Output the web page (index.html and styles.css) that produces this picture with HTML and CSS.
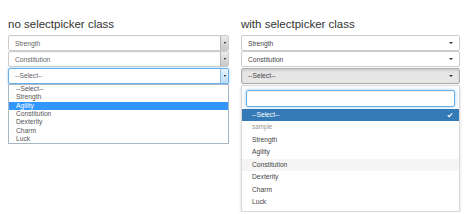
FILE: index.html
```html
<!DOCTYPE html>
<html lang="en">
<head>
  <meta charset="UTF-8">
  <title>Selectpicker demo</title>
  <link rel="stylesheet" href="styles.css">
</head>
<body>

<div class="columns">

  <div class="column left">
    <h3>no selectpicker class</h3>
    <div class="native-select">
      <span class="value">Strength</span>
      <span class="arrow-btn"><span class="arrow"></span></span>
    </div>
    <div class="native-select">
      <span class="value">Constitution</span>
      <span class="arrow-btn"><span class="arrow"></span></span>
    </div>
    <div class="native-select focused">
      <span class="value">--Select--</span>
      <span class="arrow-btn"><span class="arrow"></span></span>
    </div>
    <ul class="native-list">
      <li>--Select--</li>
      <li>Strength</li>
      <li class="highlight">Agility</li>
      <li>Constitution</li>
      <li>Dexterity</li>
      <li>Charm</li>
      <li>Luck</li>
    </ul>
  </div>

  <div class="column right">
    <h3>with selectpicker class</h3>
    <div class="picker-btn">
      <span>Strength</span>
      <span class="caret"></span>
    </div>
    <div class="picker-btn">
      <span>Constitution</span>
      <span class="caret"></span>
    </div>
    <div class="picker-btn open">
      <span>--Select--</span>
      <span class="caret"></span>
    </div>
    <div class="picker-menu">
      <div class="searchbox">
        <input type="text">
      </div>
      <ul>
        <li class="active">--Select--
          <svg class="check" viewBox="0 0 10 8" width="6" height="5">
            <path d="M0.5 4.2 L3.6 7.2 L9.5 1.2 L8.2 0 L3.6 4.6 L1.8 2.9 Z" fill="#fff"/>
          </svg>
        </li>
        <li class="header">sample</li>
        <li>Strength</li>
        <li>Agility</li>
        <li class="hover">Constitution</li>
        <li>Dexterity</li>
        <li>Charm</li>
        <li>Luck</li>
      </ul>
    </div>
  </div>

</div>

</body>
</html>
```

FILE: styles.css
```css
body {
  margin: 0;
  font-family: "Liberation Sans", Arial, sans-serif;
  background: #fff;
  color: #333;
}
.columns {
  display: flex;
  gap: 12px;
  padding: 18px 0 0 8px;
}
.column.left {
  width: 221px;
}
.column.right {
  width: 219px;
}
h3 {
  margin: 0 0 4px 0;
  font-size: 11.5px;
  font-weight: normal;
  line-height: 13px;
  color: #333;
}

/* plain selects */
.native-select {
  display: flex;
  align-items: center;
  justify-content: space-between;
  height: 16px;
  margin-bottom: 0.4px;
  border: 1px solid #ccc;
  border-radius: 2px;
  box-sizing: border-box;
  box-shadow: inset 0 0.5px 0.5px rgba(0,0,0,0.075);
  background: #fff;
}
.native-select .value {
  padding-left: 6px;
  font-size: 6.7px;
  color: #666;
}
.native-select .arrow-btn {
  display: flex;
  align-items: center;
  justify-content: center;
  width: 8px;
  height: 14px;
  background: linear-gradient(#eaeaea, #c9c9c9);
  border-left: 1px solid #b5b5b5;
  box-sizing: border-box;
}
.native-select .arrow {
  width: 0;
  height: 0;
  border-left: 1.5px solid transparent;
  border-right: 1.5px solid transparent;
  border-top: 2px solid #111;
}
.native-select.focused {
  border-color: #66afe9;
  box-shadow: 0 0 3px rgba(102,175,233,0.6);
}
.native-select.focused .arrow-btn {
  background: linear-gradient(#e4f2fd, #bcdcf6);
  border-left-color: #8fbde2;
}
.native-list {
  list-style: none;
  margin: 0;
  padding: 0;
  border: 1px solid #a9b6c4;
  background: #fff;
}
.native-list li {
  height: 8.3px;
  line-height: 8.3px;
  padding-left: 7px;
  font-size: 6.7px;
  color: #555;
}
.native-list li.highlight {
  background: #3297fd;
  color: #fff;
}

/* bootstrap-select look */
.picker-btn {
  display: flex;
  align-items: center;
  justify-content: space-between;
  height: 16px;
  margin-bottom: 0.4px;
  padding: 0 6px;
  border: 1px solid #ccc;
  border-radius: 2px;
  box-sizing: border-box;
  background: #fff;
  font-size: 6.7px;
  color: #444;
}
.picker-btn.open {
  background: #e6e6e6;
  border-color: #adadad;
  box-shadow: inset 0 1.5px 2.5px rgba(0,0,0,0.125);
}
.caret {
  width: 0;
  height: 0;
  border-left: 2px solid transparent;
  border-right: 2px solid transparent;
  border-top: 2px solid #333;
}
.picker-menu {
  margin-top: 1px;
  padding: 2px 0;
  border: 1px solid rgba(0,0,0,0.15);
  border-radius: 2px;
  background: #fff;
  box-shadow: 0 1.5px 3px rgba(0,0,0,0.175);
}
.searchbox {
  padding: 2px 4px;
}
.searchbox input {
  display: block;
  width: 100%;
  height: 17px;
  margin: 0;
  box-sizing: border-box;
  border: 1px solid #66afe9;
  border-radius: 2px;
  outline: none;
  box-shadow: inset 0 0.5px 0.5px rgba(0,0,0,0.075), 0 0 4px rgba(102,175,233,0.6);
}
.picker-menu ul {
  list-style: none;
  margin: 0;
  padding: 0;
}
.picker-menu li {
  position: relative;
  height: 12.5px;
  line-height: 12.5px;
  padding-left: 10px;
  font-size: 6.7px;
  color: #444;
}
.picker-menu li.active {
  background: #337ab7;
  color: #fff;
}
.picker-menu li.header {
  font-size: 6.3px;
  color: #999;
}
.picker-menu li.hover {
  background: #f5f5f5;
}
.check {
  position: absolute;
  right: 6px;
  top: 4px;
}
```
